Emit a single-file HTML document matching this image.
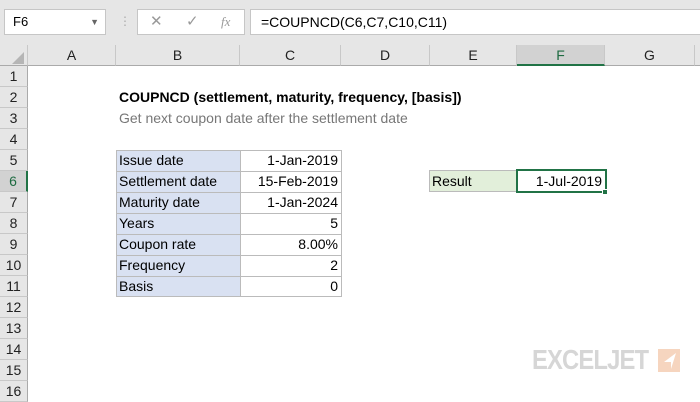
<!DOCTYPE html>
<html><head><style>
*{box-sizing:border-box;margin:0;padding:0}
body{width:700px;height:400px;overflow:hidden;background:#fff;font-family:"Liberation Sans",sans-serif;position:relative;font-size:14px;color:#000}
.a{position:absolute}
.ch{position:absolute;top:45px;height:21px;border-right:1px solid #c8c8c8;text-align:center;font-size:14px;line-height:21px;color:#222;background:#e6e6e6;border-bottom:1px solid #aaa}
.rh{position:absolute;left:0;width:28px;height:21px;border-bottom:1px solid #c8c8c8;text-align:center;line-height:21px;font-size:14px;color:#222;background:#e6e6e6;border-right:1px solid #aaa}
.c{position:absolute;height:21px;line-height:21px;font-size:14px;white-space:nowrap;padding:0 3px}
</style></head><body>
<div class="a" style="left:0;top:0;width:700px;height:45px;background:#e6e6e6"></div>
<div class="a" style="left:4px;top:9px;width:102px;height:26px;background:#fff;border:1px solid #c6c6c6;font-size:13px;line-height:24px;padding-left:8px">F6<span style="position:absolute;right:6px;top:0;font-size:9px;color:#666">▼</span></div>
<div class="a" style="left:119px;top:14px;color:#aaa;font-size:12px">⋮</div>
<div class="a" style="left:137px;top:9px;width:108px;height:26px;background:#fff;border:1px solid #c6c6c6;color:#999;font-size:15px;line-height:24px"><span style="position:absolute;left:12px">✕</span><span style="position:absolute;left:48px">✓</span><span style="position:absolute;left:83px;font-family:'Liberation Serif';font-style:italic;font-size:13px">fx</span></div>
<div class="a" style="left:250px;top:9px;width:460px;height:26px;background:#fff;border:1px solid #c6c6c6;font-size:14px;line-height:24px;padding-left:10px">=COUPNCD(C6,C7,C10,C11)</div>
<div class="ch" style="left:0;width:28px"></div>
<div class="a" style="left:12px;top:52px;width:0;height:0;border-left:12px solid transparent;border-bottom:12px solid #b5b5b5"></div>
<div class="ch" style="left:28px;width:88px">A</div>
<div class="ch" style="left:116px;width:124px">B</div>
<div class="ch" style="left:240px;width:101px">C</div>
<div class="ch" style="left:341px;width:89px">D</div>
<div class="ch" style="left:430px;width:87px">E</div>
<div class="ch" style="left:517px;width:88px;background:#d2d2d2;color:#1e6b41;border-bottom:2px solid #217346">F</div>
<div class="ch" style="left:605px;width:90px">G</div>
<div class="ch" style="left:695px;width:10px"></div>
<div class="rh" style="top:66px">1</div><div class="rh" style="top:87px">2</div><div class="rh" style="top:108px">3</div><div class="rh" style="top:129px">4</div><div class="rh" style="top:150px">5</div>
<div class="rh" style="top:171px;background:#d2d2d2;color:#1e6b41;border-right:2px solid #217346">6</div>
<div class="rh" style="top:192px">7</div><div class="rh" style="top:213px">8</div><div class="rh" style="top:234px">9</div><div class="rh" style="top:255px">10</div><div class="rh" style="top:276px">11</div><div class="rh" style="top:297px">12</div><div class="rh" style="top:318px">13</div><div class="rh" style="top:339px">14</div><div class="rh" style="top:360px">15</div><div class="rh" style="top:381px">16</div>
<div class="c" style="left:116px;top:87px;font-weight:bold">COUPNCD (settlement, maturity, frequency, [basis])</div>
<div class="c" style="left:116px;top:108px;color:#777">Get next coupon date after the settlement date</div>
<div class="a" style="left:116px;top:150px;width:125px;height:147px;background:#d9e1f2"></div>
<div class="a" style="left:116px;top:150px;width:226px;height:147px;border:1px solid #bbb"></div>
<div class="a" style="left:240px;top:150px;width:102px;height:147px;border-left:1px solid #bbb"></div>
<div class="a" style="left:116px;top:171px;width:226px;border-top:1px solid #bbb"></div>
<div class="a" style="left:116px;top:192px;width:226px;border-top:1px solid #bbb"></div>
<div class="a" style="left:116px;top:213px;width:226px;border-top:1px solid #bbb"></div>
<div class="a" style="left:116px;top:234px;width:226px;border-top:1px solid #bbb"></div>
<div class="a" style="left:116px;top:255px;width:226px;border-top:1px solid #bbb"></div>
<div class="a" style="left:116px;top:276px;width:226px;border-top:1px solid #bbb"></div>
<div class="c" style="left:116px;top:150px">Issue date</div><div class="c" style="left:240px;top:150px;width:101px;text-align:right">1-Jan-2019</div>
<div class="c" style="left:116px;top:171px">Settlement date</div><div class="c" style="left:240px;top:171px;width:101px;text-align:right">15-Feb-2019</div>
<div class="c" style="left:116px;top:192px">Maturity date</div><div class="c" style="left:240px;top:192px;width:101px;text-align:right">1-Jan-2024</div>
<div class="c" style="left:116px;top:213px">Years</div><div class="c" style="left:240px;top:213px;width:101px;text-align:right">5</div>
<div class="c" style="left:116px;top:234px">Coupon rate</div><div class="c" style="left:240px;top:234px;width:101px;text-align:right">8.00%</div>
<div class="c" style="left:116px;top:255px">Frequency</div><div class="c" style="left:240px;top:255px;width:101px;text-align:right">2</div>
<div class="c" style="left:116px;top:276px">Basis</div><div class="c" style="left:240px;top:276px;width:101px;text-align:right">0</div>
<div class="a" style="left:429px;top:170px;width:89px;height:22px;background:#e2efda;border:1px solid #bbb"></div>
<div class="c" style="left:429px;top:171px">Result</div>
<div class="a" style="left:516px;top:169px;width:91px;height:24px;border:2px solid #217346"></div>
<div class="c" style="left:517px;top:171px;width:88px;text-align:right">1-Jul-2019</div>
<div class="a" style="left:602px;top:189px;width:6px;height:6px;background:#217346;border:1px solid #fff"></div>
<div class="a" style="left:532px;top:344px;font-size:28px;font-weight:bold;color:#d6d6d6;letter-spacing:-1px;transform:scaleX(0.85);transform-origin:0 0;white-space:nowrap">EXCELJET</div>
<div class="a" style="left:658px;top:349px;width:22px;height:23px;background:#f6d5bf"></div>
<svg class="a" style="left:658px;top:349px" width="22" height="23"><polygon points="18,4 6,13 13,13 13,20" fill="#fff"/></svg>
</body></html>
